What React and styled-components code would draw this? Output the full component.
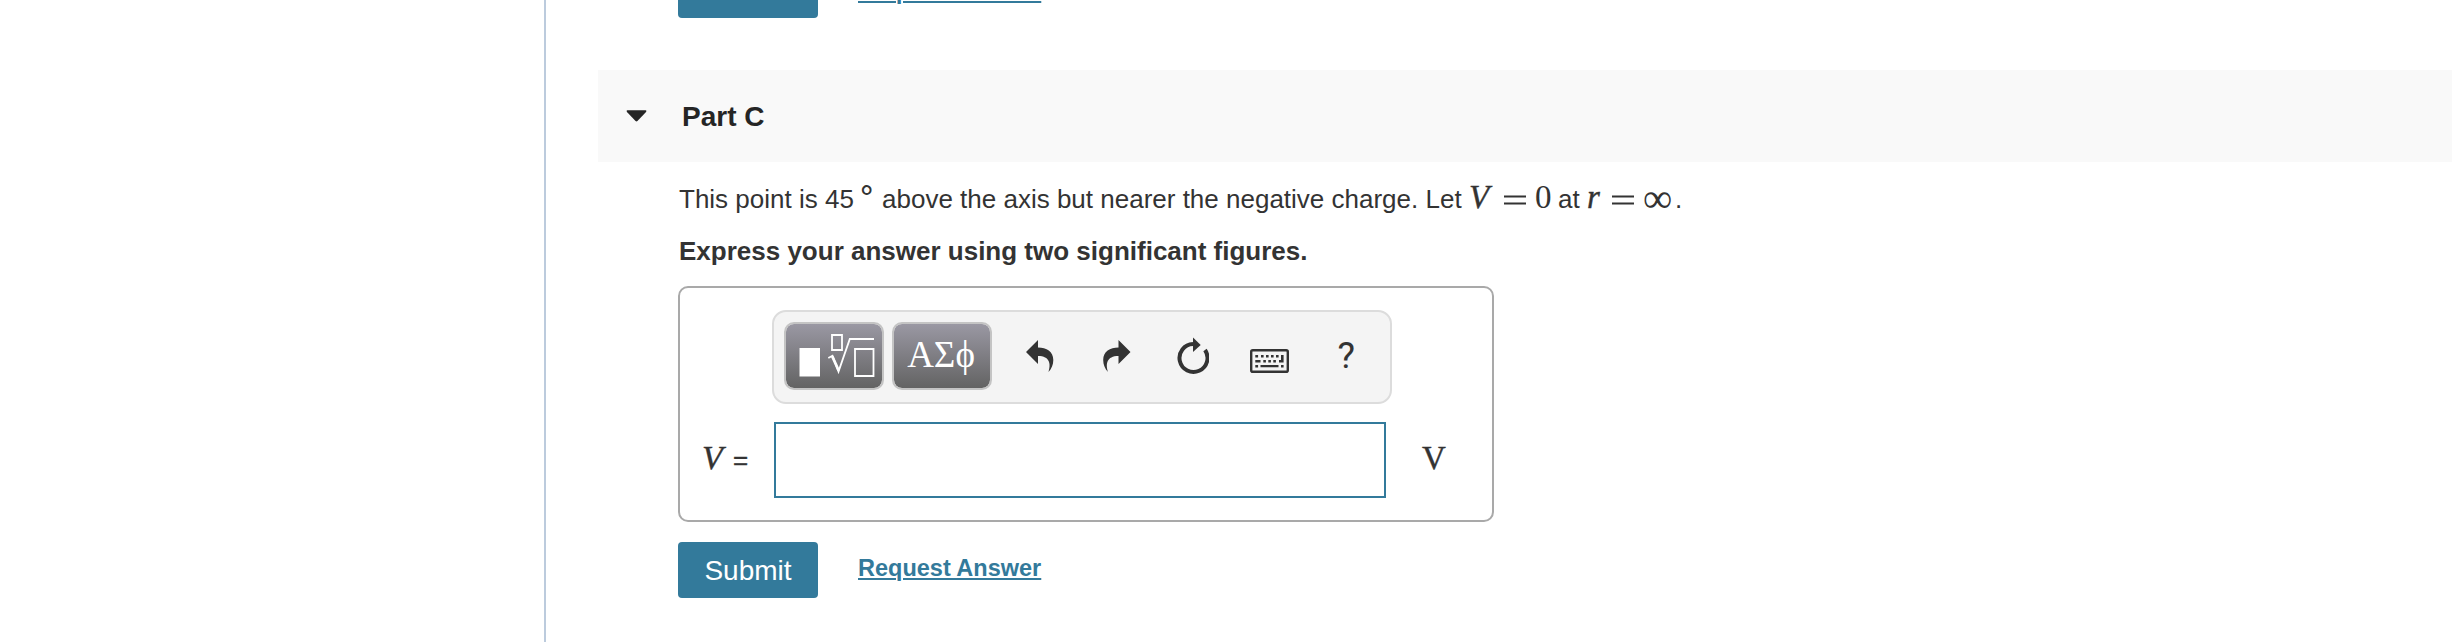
import styled, { createGlobalStyle } from "styled-components";

export default function App() {
    return (
        <>
            <GlobalStyle />
            <Page>
                <Sidebar />
                <Content>
                    <PreviousActions>
                        <Actions $linkGap={2} />
                    </PreviousActions>
                    <PartHeader>
                        <Caret viewBox="0 0 22 12">
                            <path d="M1.4 0h19.2q1.4.4.4 1.8L12 11.2q-1 1-2 0L1 1.8Q0 .4 1.4 0z" />
                        </Caret>
                        <PartTitle>Part C</PartTitle>
                    </PartHeader>
                    <PartBody>
                        <Question />
                        <Instructions>Express your answer using two significant figures.</Instructions>
                        <AnswerBox>
                            <Toolbar />
                            <AnswerRow>
                                <AnswerLabel>
                                    <Variable>V</Variable>
                                    <Equals>=</Equals>
                                </AnswerLabel>
                                <AnswerInput aria-label="V" />
                                <Unit>V</Unit>
                            </AnswerRow>
                        </AnswerBox>
                        <Actions $linkGap={-5} />
                    </PartBody>
                </Content>
            </Page>
        </>
    );
}

function Actions({ $linkGap }) {
    return (
        <ActionRow>
            <SubmitButton>Submit</SubmitButton>
            <RequestLink href="#answer" $gap={$linkGap}>Request Answer</RequestLink>
        </ActionRow>
    );
}

function Question() {
    return (
        <QuestionLine>
            <Words $width={178}>This point is 45</Words>
            <MathTerm $width={25} $size={31}><Shifted $by={8}>∘</Shifted></MathTerm>
            <Words $width={587}>above the axis but nearer the negative charge. Let</Words>
            <MathTerm $width={35} $italic>V</MathTerm>
            <MathEquals />
            <MathTerm $width={23}>0</MathTerm>
            <Words $width={29}>at</Words>
            <MathTerm $width={25} $italic>r</MathTerm>
            <MathEquals />
            <MathTerm $width={32} $size={41}><Shifted $by={-4}>∞</Shifted></MathTerm>
            <Words>.</Words>
        </QuestionLine>
    );
}

function MathEquals() {
    return (
        <EqualsIcon viewBox="0 0 22 13">
            <path d="M0 1.5h22M0 8.5h22" />
        </EqualsIcon>
    );
}

function Toolbar() {
    return (
        <ToolbarPanel>
            <PaletteButton aria-label="Templates">
                <svg width="96" height="64" viewBox="0 0 96 64" fill="none" stroke="#fff" strokeWidth="1.8">
                    <path d="M13.5 24H34v28.5H13.5z" fill="#fff" stroke="none" />
                    <path d="M46 11h10v15H46zM69 25h18.5v27H69z" />
                    <path d="M42.3 34l4.2-2.2 6 15.7L63.8 15H88" />
                    <path d="M46.3 32.5l6.4 14" strokeWidth="2.8" />
                </svg>
            </PaletteButton>
            <PaletteButton>
                <GreekLabel>ΑΣϕ</GreekLabel>
            </PaletteButton>
            <IconGroup>
                <IconButton aria-label="Undo">
                    <svg width="28" height="32" viewBox="0 0 28 32">
                        <path d="M0 12L12 0v7.5C20.5 7.5 27.3 11.5 27.3 20c0 4.8-1.8 8.8-4.8 12C25 24 24 16 12 16v8z" />
                    </svg>
                </IconButton>
                <IconButton aria-label="Redo">
                    <svg width="28" height="32" viewBox="0 0 28 32">
                        <path d="M27.5 12l-12-12v7.5C7 7.5.2 11.5.2 20c0 4.8 1.8 8.8 4.8 12C2.5 24 3.5 16 15.5 16v8z" />
                    </svg>
                </IconButton>
                <IconButton aria-label="Reset">
                    <svg width="32" height="38" viewBox="0 0 32 38">
                        <path d="M16 7A14 14 0 1 0 28 13" fill="none" stroke="#333" strokeWidth="4" />
                        <path d="M16 .5L23.7 8 16 15z" />
                    </svg>
                </IconButton>
                <IconButton aria-label="Keyboard shortcuts">
                    <KeyboardIcon viewBox="0 0 39 24">
                        <rect x="1.2" y="1.2" width="36.6" height="21.6" rx="1.6" fill="none" stroke="#333" strokeWidth="2.4" />
                        <path d="M5.3 6h2.8v2.5H5.3zM11 6h2.6v2.5H11zM16 6h2.6v2.5H16zM21 6h2.6v2.5H21zM26 6h2.6v2.5H26z" />
                        <path d="M31 6h2.6v7.6H29V11h2zM5.3 11h5.2v2.5H5.3zM13.3 11h2.6v2.5h-2.6zM18.3 11h2.6v2.5h-2.6zM23.3 11h2.6v2.5h-2.6z" />
                        <path d="M5.3 16h2.8v2.5H5.3zM10.5 16h18v2.3h-18zM31 16h2.6v2.5H31z" />
                    </KeyboardIcon>
                </IconButton>
                <IconButton aria-label="Help">
                    <HelpMark>?</HelpMark>
                </IconButton>
            </IconGroup>
        </ToolbarPanel>
    );
}

const GlobalStyle = createGlobalStyle`
    * {
        box-sizing: border-box;
    }

    body {
        margin: 0;
        overflow: hidden;
        background: #fff;
        color: #333;
        font-family: "Liberation Sans", Arial, sans-serif;
    }

    button {
        font-family: inherit;
        padding: 0;
        border: 0;
        cursor: pointer;
    }
`;

const Page = styled.div`
    display: flex;
    height: 642px;
    overflow: hidden;
`;

const Sidebar = styled.aside`
    flex: none;
    width: 546px;
    border-right: 2px solid #bccbdd;
`;

const Content = styled.main`
    flex: 1;
    padding-left: 52px;
`;

const PreviousActions = styled.div`
    margin-top: -38px;
    padding-left: 80px;
    height: 108px;
`;

const PartHeader = styled.header`
    display: flex;
    align-items: center;
    height: 92px;
    padding-left: 28px;
    background: #f9f9f9;
`;

const Caret = styled.svg`
    width: 21px;
    height: 12px;
    fill: #252525;
`;

const PartTitle = styled.h2`
    margin: 1px 0 0 35px;
    color: #252525;
    font-size: 28px;
    line-height: 32px;
`;

const PartBody = styled.section`
    padding: 17px 0 0 80px;
`;

const QuestionLine = styled.p`
    display: flex;
    align-items: baseline;
    margin: 0;
    padding-left: 1px;
    height: 56px;
    font-size: 26px;
    line-height: 40px;
    white-space: nowrap;
`;

const Words = styled.span`
    flex: none;
    width: ${({ $width }) => ($width ? `${$width}px` : "auto")};
`;

const MathTerm = styled.span`
    flex: none;
    width: ${({ $width }) => $width}px;
    font-family: "Liberation Serif", "Times New Roman", serif;
    font-size: ${({ $size }) => $size || 33}px;
    font-style: ${({ $italic }) => ($italic ? "italic" : "normal")};
    line-height: 30px;
    -webkit-text-stroke: ${({ $italic }) => ($italic ? "0.4px" : "0")};
`;

const Shifted = styled.span`
    line-height: 0;
    vertical-align: ${({ $by }) => $by}px;
`;

const EqualsIcon = styled.svg`
    flex: none;
    width: 22px;
    height: 13px;
    margin-right: 9px;
    stroke: #333;
    stroke-width: 1.8;
`;

const Instructions = styled.p`
    margin: 0;
    padding-left: 1px;
    height: 51px;
    font-size: 26px;
    font-weight: bold;
    line-height: 32px;
`;

const AnswerBox = styled.div`
    width: 816px;
    height: 236px;
    padding: 22px 0 0 22px;
    border: 2px solid #a9a9a9;
    border-radius: 10px;
    margin-bottom: 20px;
`;

const ToolbarPanel = styled.div`
    display: flex;
    align-items: center;
    width: 620px;
    height: 94px;
    margin-left: 70px;
    padding: 0 0 2px 10px;
    border: 2px solid #dcdcdc;
    border-radius: 14px;
    background: #f4f4f4;
`;

const PaletteButton = styled.button`
    width: 100px;
    height: 68px;
    margin-right: 8px;
    border: 2px solid #c4c4c4;
    border-radius: 10px;
    background: linear-gradient(#9a98a3, #636363) padding-box;
    color: #fff;

    svg {
        display: block;
    }
`;

const GreekLabel = styled.span`
    display: block;
    padding: 0 2px 3px 0;
    font-family: "Liberation Serif", serif;
    font-size: 37px;
    line-height: 60px;
`;

const IconGroup = styled.div`
    display: flex;
    margin-left: 2px;
`;

const IconButton = styled.button`
    display: flex;
    align-items: center;
    justify-content: center;
    width: 76.5px;
    height: 68px;
    background: none;
    fill: #333;
    color: #333;
`;

const KeyboardIcon = styled.svg`
    width: 39px;
    height: 24px;
    margin-top: 10px;
`;

const HelpMark = styled.span`
    font-family: Roboto, sans-serif;
    font-size: 37px;
    line-height: 40px;
`;

const AnswerRow = styled.div`
    display: flex;
    align-items: center;
    margin-top: 18px;
`;

const AnswerLabel = styled.label`
    display: flex;
    align-items: baseline;
    width: 72px;
    padding-bottom: 4px;
`;

const Variable = styled.span`
    width: 31px;
    font-family: "Liberation Serif", serif;
    font-size: 34px;
    font-style: italic;
    line-height: 40px;
    -webkit-text-stroke: 0.4px;
`;

const Equals = styled.span`
    font-size: 26px;
    -webkit-text-stroke: 0.4px;
`;

const AnswerInput = styled.input`
    width: 612px;
    height: 76px;
    border: 2px solid #337a9b;
    border-radius: 0;
    outline: none;
    background: #fff;
    font-size: 26px;
`;

const Unit = styled.span`
    margin-left: 36px;
    padding-bottom: 4px;
    font-family: "Liberation Serif", serif;
    font-size: 33px;
    line-height: 40px;
    -webkit-text-stroke: 0.4px;
`;

const ActionRow = styled.div`
    display: flex;
    align-items: center;
    height: 56px;
`;

const SubmitButton = styled.button`
    width: 140px;
    height: 56px;
    padding-top: 2px;
    border-radius: 4px;
    background: #337a9b;
    color: #fff;
    font-size: 28px;
`;

const RequestLink = styled.a`
    margin: ${({ $gap }) => $gap}px 0 0 40px;
    color: #337a9b;
    font-size: 23.5px;
    font-weight: bold;
    line-height: 30px;
    text-decoration: underline;
    text-decoration-thickness: 2px;
    text-underline-offset: 2px;
`;
